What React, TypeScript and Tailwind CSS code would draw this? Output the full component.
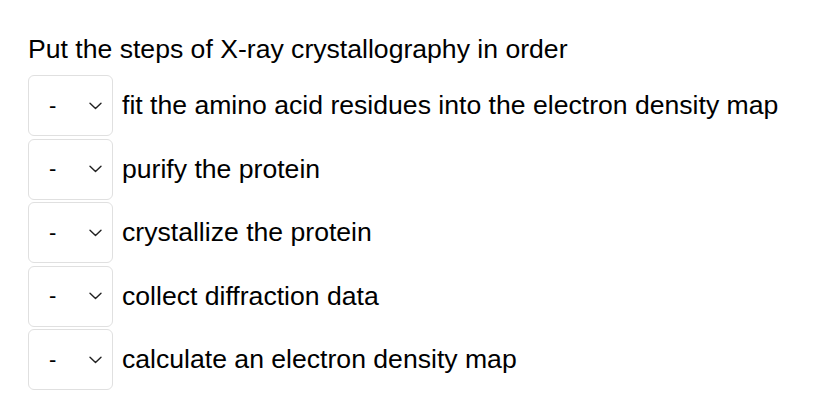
const steps = [
  "fit the amino acid residues into the electron density map",
  "purify the protein",
  "crystallize the protein",
  "collect diffraction data",
  "calculate an electron density map",
];

const Chevron = () => (
  <svg width="13" height="8" viewBox="0 0 13 8" fill="none" className="shrink-0">
    <path d="M1 1.2 L6.5 6.6 L12 1.2" stroke="#222" strokeWidth="1.4" strokeLinecap="round" strokeLinejoin="round" />
  </svg>
);

const OrderRow = ({ label }: { label: string }) => (
  <div className="flex items-center">
    <div className="flex h-[61px] w-[85px] items-center justify-between rounded-[6px] border border-[#e0e0e0] pl-[20px] pr-[10px]">
      <span className="text-[22px] leading-none">-</span>
      <Chevron />
    </div>
    <span className="ml-[9px] text-[26.6px] leading-none text-black">{label}</span>
  </div>
);

export default function App() {
  return (
    <div className="min-h-[402px] w-[826px] bg-white pl-[28px] pt-[34px] font-['Liberation_Sans',Arial,sans-serif] text-black">
      <h1 className="text-[26.6px] leading-[30px]">Put the steps of X-ray crystallography in order</h1>
      <div className="mt-[11px] flex flex-col gap-[2.5px]">
        {steps.map(s => (
          <OrderRow key={s} label={s} />
        ))}
      </div>
    </div>
  );
}
